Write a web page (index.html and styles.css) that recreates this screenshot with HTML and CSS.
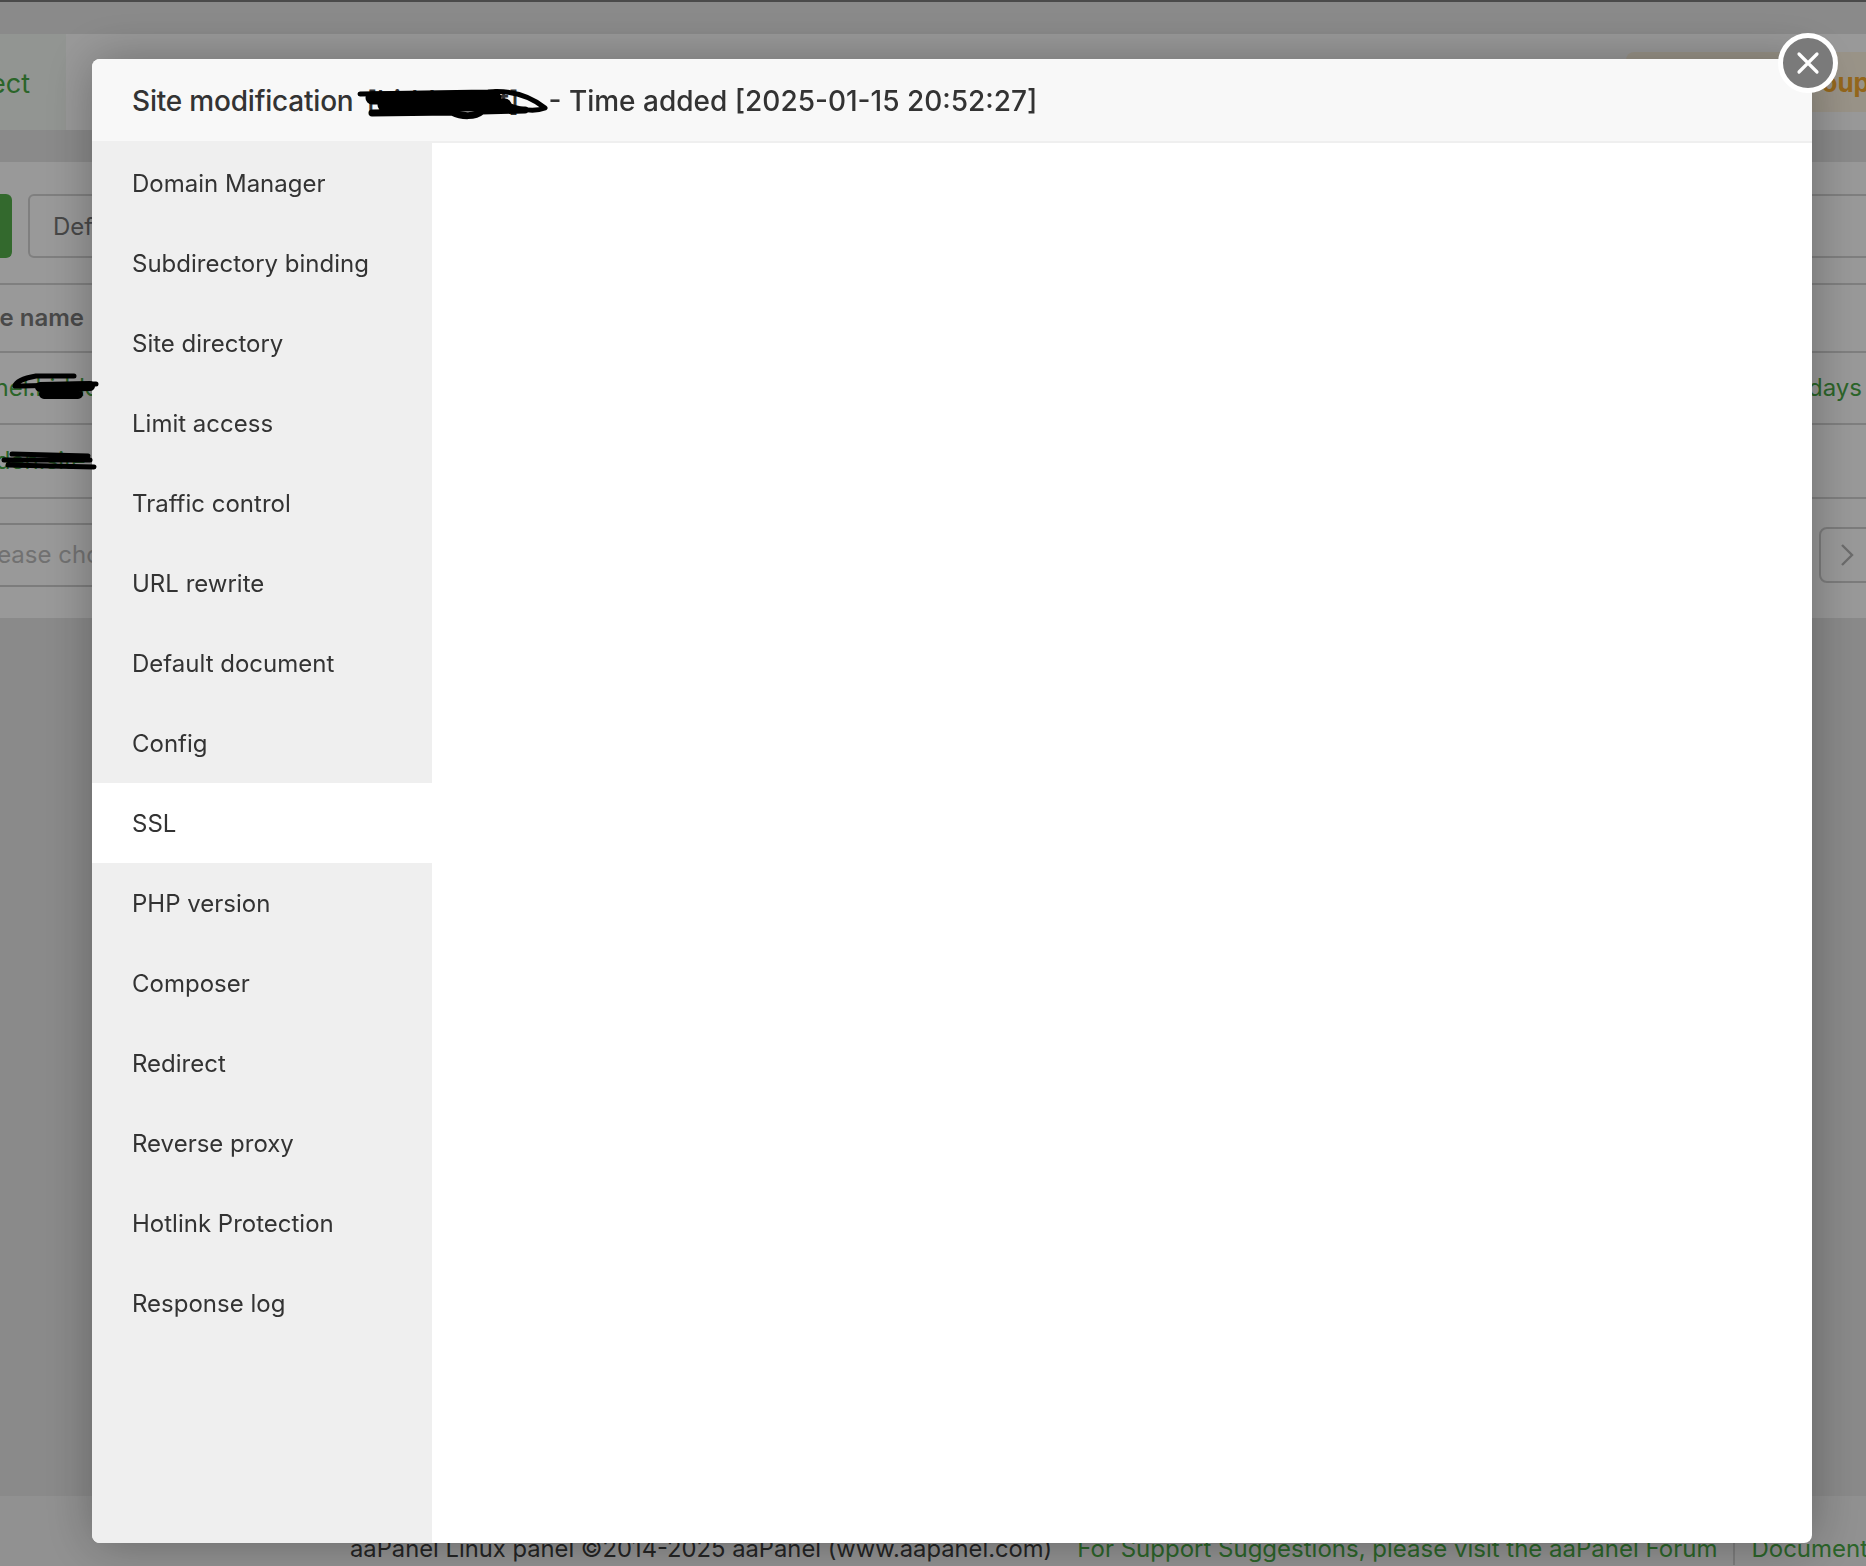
FILE: index.html
```html
<!DOCTYPE html>
<html lang="en">
<head>
<meta charset="utf-8">
<title>Site modification</title>
<link rel="stylesheet" href="styles.css">
</head>
<body>
<div class="page">
  <div class="strip"></div>
  <div class="tabbar">
    <div class="tab-left"><span>Site project</span></div>
    <div class="tab-right">Group</div>
  </div>
  <div class="card">
    <div class="toolbar">
      <div class="btn-green"></div>
      <div class="select">
        <span>Default category</span>
        <svg class="select-chevron" width="14" height="10" viewBox="0 0 14 10"><path d="M1 1l6 6 6-6" fill="none" stroke="#a8a8a8" stroke-width="2"/></svg>
      </div>
    </div>
    <div class="row row-head"><div class="cell-name">Site name</div></div>
    <div class="row row-one">
      <div class="cell-name cell-link">aapanel.hidden</div>
      <div class="cell-days">days</div>
    </div>
    <div class="row row-two"><div class="cell-name cell-link">hidden.site.dl</div></div>
    <div class="pager-row">
      <div class="input-box"><span>Please choose</span></div>
      <div class="pager-btn">
        <svg width="14" height="24" viewBox="0 0 14 24"><path d="M2 2l10 10L2 22" fill="none" stroke="#b4b4b4" stroke-width="2.4"/></svg>
      </div>
    </div>
  </div>
  <div class="spacer"></div>
  <div class="footer">
    <span class="foot-copy">aaPanel Linux panel ©2014-2025 aaPanel (www.aapanel.com)</span>
    <span class="foot-link">For Support Suggestions, please visit the aaPanel Forum</span>
    <span class="foot-sep"></span>
    <span class="foot-link">Documentation</span>
  </div>
</div>

<div class="shade"></div>

<div class="modal">
  <div class="modal-head"><span class="head-lead">Site modification</span><span class="site-tag">[hidden.sit]</span>- Time added [2025-01-15 20:52:27]</div>
  <div class="modal-body">
    <ul class="side">
      <li>Domain Manager</li>
      <li>Subdirectory binding</li>
      <li>Site directory</li>
      <li>Limit access</li>
      <li>Traffic control</li>
      <li>URL rewrite</li>
      <li>Default document</li>
      <li>Config</li>
      <li class="active">SSL</li>
      <li>PHP version</li>
      <li>Composer</li>
      <li>Redirect</li>
      <li>Reverse proxy</li>
      <li>Hotlink Protection</li>
      <li>Response log</li>
    </ul>
    <div class="pane"></div>
  </div>
  <button class="close" aria-label="Close">
    <svg width="26" height="26" viewBox="0 0 26 26"><path d="M4 4l18 18M22 4L4 22" fill="none" stroke="#fff" stroke-width="3.2" stroke-linecap="round"/></svg>
  </button>
</div>

<svg class="scribbles" width="1866" height="1566" viewBox="0 0 1866 1566">
  <g fill="none" stroke="#000" stroke-linecap="round" stroke-linejoin="round">
    <path stroke-width="5" d="M360 94L488 92C510 90 530 96 545 108C535 112 520 110 505 104"/>
    <path stroke-width="13" d="M372 98L495 98M384 105L505 105"/>
    <path stroke-width="7" d="M372 113L452 112C462 117 475 117 482 111L525 110"/>
    <path stroke-width="5" d="M74 376L36 376C24 378 16 382 15 386C40 386 70 384 96 384"/>
    <path stroke-width="10" d="M40 387L90 386M44 394L78 394"/>
    <path stroke-width="5" d="M12 454L88 456M4 460L90 460M8 465L94 467"/>
  </g>
</svg>
</body>
</html>
```
FILE: styles.css
```css
* { box-sizing: border-box; }
html, body { margin: 0; height: 1566px; overflow: hidden; }
body { background: #e6e6e6; font-family: Inter, "Liberation Sans", sans-serif; color: #333; }

.page { display: flex; flex-direction: column; width: 1866px; height: 1566px; overflow: hidden; }
.strip { height: 2px; background: #7c7c7c; margin-bottom: 32px; flex: none; }

.tabbar { display: flex; justify-content: space-between; align-items: center; height: 96px; background: #fff; flex: none; margin-bottom: 32px; }
.tab-left { display: flex; justify-content: flex-end; width: 66px; height: 96px; padding: 2px 36px 0 0; align-items: center; background: #f4f9f3; white-space: nowrap; font-size: 27px; color: #49a845; }
.tab-right { width: 240px; height: 60px; padding-left: 166px; line-height: 62px; background: #fff5e2; border-radius: 8px 0 0 8px; font-size: 26px; font-weight: 700; color: #f7ab2f; white-space: nowrap; }

.card { background: #fff; height: 456px; flex: none; display: flex; flex-direction: column; }
.toolbar { display: flex; gap: 16px; height: 121px; padding-top: 32px; flex: none; margin-left: -88px; }
.btn-green { width: 100px; height: 64px; background: #55b04c; border-radius: 6px; flex: none; }
.select { display: flex; justify-content: space-between; align-items: center; flex: none; width: 1880px; height: 64px; padding: 0 40px 0 23px; border: 2px solid #d4d4d4; border-radius: 6px; font-size: 24px; color: #777; white-space: nowrap; }
.select-chevron { margin-right: -36px; position: relative; left: -19px; }

.row { display: flex; justify-content: space-between; align-items: center; padding-bottom: 2px; border-top: 2px solid #d4d4d4; flex: none; }
.row-head { height: 68px; }
.row-one { height: 72px; }
.row-two { height: 74px; }
.cell-name { display: flex; justify-content: flex-end; width: 84px; white-space: nowrap; font-size: 24px; }
.row-head .cell-name { font-weight: 600; color: #7a7a7a; }
.cell-link { width: 113px; color: #49a845; }
.cell-days { padding-right: 4px; font-size: 24px; color: #49a845; }

.pager-row { display: flex; justify-content: space-between; align-items: center; padding-bottom: 8px; border-top: 2px solid #d4d4d4; flex: 1; }
.input-box { display: flex; align-items: center; width: 130px; height: 64px; margin-left: -30px; padding-left: 4px; border: 2px solid #cfcfcf; font-size: 24px; color: #bdbdbd; white-space: nowrap; overflow: hidden; }
.pager-btn { display: flex; justify-content: center; align-items: center; width: 56px; height: 56px; margin-right: -9px; border: 2px solid #cfcfcf; border-radius: 8px; }

.spacer { flex: 1; }
.footer { display: flex; align-items: flex-end; flex: none; height: 70px; padding: 0 0 1px 350px; background: #f2f2f2; font-size: 23.75px; white-space: nowrap; line-height: 32px; }
.foot-copy { color: #3c3c3c; margin-right: 25px; }
.foot-link { color: #49a845; font-size: 24px; }
.foot-sep { width: 2px; height: 32px; margin: 0 16px; background: #cfcfcf; flex: none; }

.shade { position: fixed; inset: 0; background: rgba(0, 0, 0, .4); }

.modal { position: fixed; left: 92px; top: 59px; width: 1720px; height: 1484px; display: flex; flex-direction: column; background: #fff; border-radius: 8px; box-shadow: 1px 1px 50px rgba(0, 0, 0, .3); }
.modal-head { flex: none; height: 84px; padding-left: 40px; line-height: 84px; background: #f8f8f8; border-bottom: 2px solid #efefef; border-radius: 8px 8px 0 0; font-size: 28px; font-weight: 500; color: #333; white-space: nowrap; }
.head-lead { letter-spacing: -.2px; }
.site-tag { display: inline-block; width: 182px; margin-left: 13px; overflow: hidden; vertical-align: bottom; }
.modal-body { flex: 1; display: flex; min-height: 0; }
.side { flex: none; width: 340px; margin: 0; padding: 0; list-style: none; background: #efefef; border-radius: 0 0 0 8px; }
.side li { height: 80px; padding-left: 40px; line-height: 82px; font-size: 24px; color: #333; }
.side li.active { background: #fff; }
.pane { flex: 1; }

.close { position: absolute; right: -26px; top: -26px; display: flex; justify-content: center; align-items: center; width: 60px; height: 60px; padding: 0; background: #7a7a7a; border: 5px solid #fff; border-radius: 50%; }

.scribbles { position: fixed; left: 0; top: 0; pointer-events: none; }
```
